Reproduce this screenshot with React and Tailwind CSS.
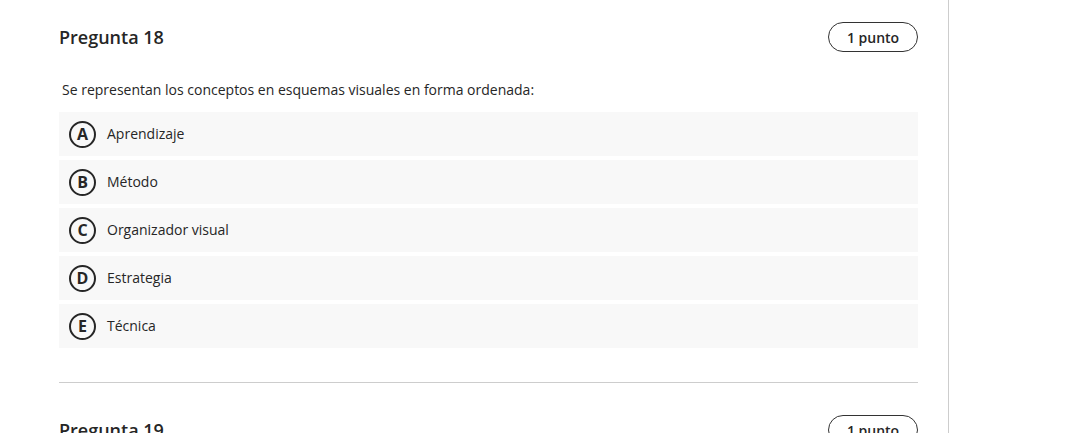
import React from 'react';

const options = [
  { letter: 'A', text: 'Aprendizaje' },
  { letter: 'B', text: 'Método' },
  { letter: 'C', text: 'Organizador visual' },
  { letter: 'D', text: 'Estrategia' },
  { letter: 'E', text: 'Técnica' },
];

const Header = ({ n }) => (
  <div className="flex items-center justify-between h-[30px]">
    <h2 className="text-[18px] font-semibold text-[#262626]">Pregunta {n}</h2>
    <span className="flex items-center justify-center w-[90px] h-[30px] rounded-full border border-[#333] text-[14px] font-semibold text-[#262626]">
      1 punto
    </span>
  </div>
);

export default function App() {
  return (
    <div className="flex h-[433px] overflow-hidden bg-white" style={{ fontFamily: '"Open Sans", sans-serif' }}>
      <div className="w-[949px] shrink-0 border-r border-[#cdcdcd] pl-[59px] pr-[30px] pt-[22px]">
        <Header n={18} />
        <p className="mt-[28px] pl-[3px] text-[14px] leading-[20px] text-[#262626]">
          Se representan los conceptos en esquemas visuales en forma ordenada:
        </p>
        <div className="mt-[12px] flex flex-col gap-[4px]">
          {options.map((o) => (
            <div key={o.letter} className="flex items-center h-[44px] bg-[#f8f8f8] pl-[10px]">
              <span className="flex items-center justify-center w-[27px] h-[27px] rounded-full border-2 border-[#262626] text-[16px] leading-none font-bold text-[#262626]">
                {o.letter}
              </span>
              <span className="ml-[11px] text-[14px] leading-[20px] -mt-[1px] text-[#262626]">{o.text}</span>
            </div>
          ))}
        </div>
        <div className="mt-[34px] border-t border-[#cdcdcd]" />
        <div className="mt-[32px]">
          <Header n={19} />
        </div>
      </div>
      <div className="flex-1" />
    </div>
  );
}
